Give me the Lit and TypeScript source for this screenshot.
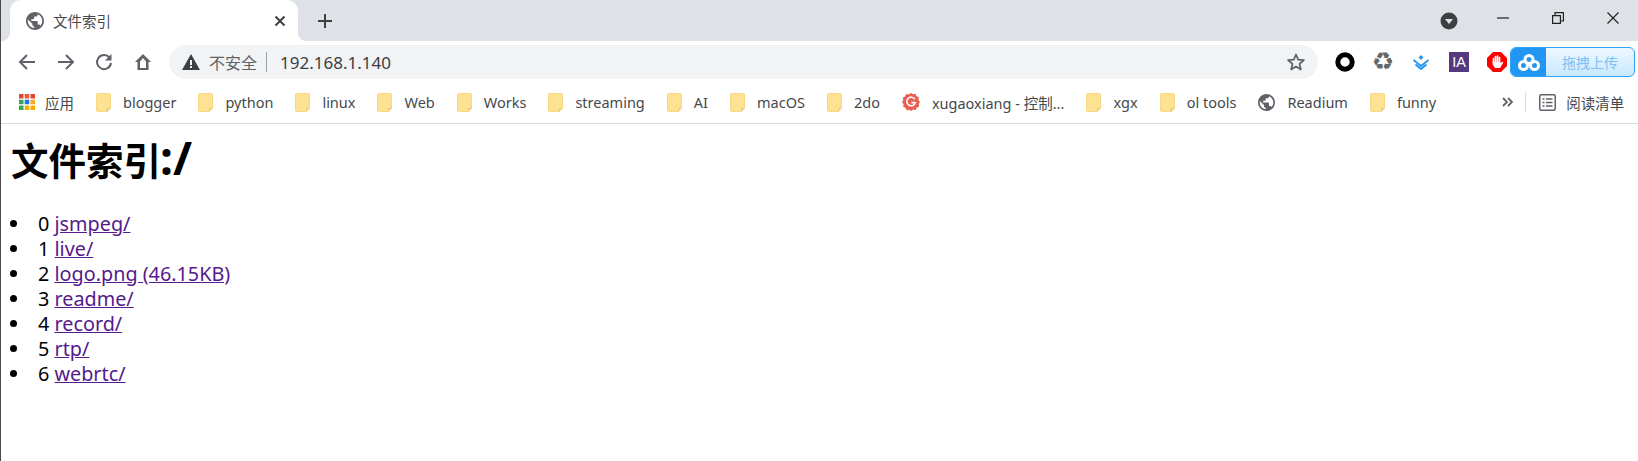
import { LitElement, html, css, svg } from "lit";
import { customElement } from "lit/decorators.js";

const GLOBE = "M12 2C6.48 2 2 6.48 2 12s4.48 10 10 10 10-4.48 10-10S17.52 2 12 2zm-1 17.93c-3.95-.49-7-3.85-7-7.93 0-.62.08-1.21.21-1.79L9 15v1c0 1.1.9 2 2 2v1.93zm6.9-2.54c-.26-.81-1-1.39-1.9-1.39h-1v-3c0-.55-.45-1-1-1H8v-2h2c.55 0 1-.45 1-1V7h2c1.1 0 2-.9 2-2v-.41c2.93 1.19 5 4.06 5 7.41 0 2.08-.8 3.97-2.1 5.39z";

const globe = (size: number) => html`<svg class="ico" width=${size} height=${size} viewBox="2 2 20 20"><path fill="#5f6368" d=${GLOBE}></path></svg>`;

const folder = html`<svg class="ico" width="15" height="19" viewBox="0 0 15 19">
  <path d="M1.500.500h12a1 1 0 0 1 1 1v13.500l-3 3.500H1.500a1 1 0 0 1-1-1V1.500a1 1 0 0 1 1-1z" fill="#fde293" stroke="#f6d883"></path>
  <path d="M11.500 18.500v-3h3" fill="none" stroke="#efc970"></path>
</svg>`;

const apps = html`<svg class="ico" width="16" height="16" viewBox="0 0 16 16">
  ${[
    ["#ea4335", "#ee5a34", "#ea4335"],
    ["#34a853", "#1a73e8", "#f9a825"],
    ["#34a853", "#f9ab00", "#f9ab00"],
  ].map((row, y) => row.map((c, x) => svg`<rect x=${x * 5.75} y=${y * 5.75} width="4.500" height="4.500" fill=${c}></rect>`))}
</svg>`;

const gitee = html`<svg class="ico" width="18" height="18" viewBox="0 0 18 18">
  <path fill="#ea5d50" d="M9 0l2 1.300 2.500-.5 1 2.400 2.400 1-.5 2.500L18 9l-1.300 2 .5 2.500-2.400 1-1 2.400-2.500-.5L9 18l-2-1.300-2.500.5-1-2.400-2.400-1 .5-2.500L0 9l1.300-2-.5-2.500 2.400-1 1-2.400 2.500.5z"></path>
  <path fill="none" stroke="#fff" stroke-width="1.600" d="M12.800 6.200A4.300 4.300 0 1 0 13.300 9.600H9.300"></path>
</svg>`;

const bookmarks: { label: string; icon?: unknown }[] = [
  { label: "blogger" },
  { label: "python" },
  { label: "linux" },
  { label: "Web" },
  { label: "Works" },
  { label: "streaming" },
  { label: "AI" },
  { label: "macOS" },
  { label: "2do" },
  { label: "xugaoxiang - 控制...", icon: gitee },
  { label: "xgx" },
  { label: "ol tools" },
  { label: "Readium", icon: globe(17) },
  { label: "funny" },
];

const files = ["jsmpeg/", "live/", "logo.png (46.15KB)", "readme/", "record/", "rtp/", "webrtc/"];

@customElement("app-root")
export class AppRoot extends LitElement {
  static styles = css`
    :host {
      display: block;
      box-sizing: border-box;
      height: 461px;
      overflow: hidden;
      background: #fff;
      border-left: 1px solid #4a4a4a;
      font-family: "Noto Sans", "Noto Sans CJK SC", sans-serif;
      color: #000;
    }
    .strip {
      height: 41px;
      background: #dee1e6;
      display: flex;
      align-items: stretch;
      padding-left: 9px;
    }
    .tab {
      position: relative;
      width: 288px;
      box-sizing: border-box;
      background: #fff;
      border-radius: 11px 11px 0 0;
      display: flex;
      align-items: center;
      padding: 0 11px 0 16px;
      gap: 9px;
    }
    .tab::before,
    .tab::after {
      content: "";
      position: absolute;
      bottom: 0;
      width: 9px;
      height: 9px;
    }
    .tab::before {
      left: -9px;
      background: radial-gradient(circle at 0 0, transparent 9px, #fff 9.500px);
    }
    .tab::after {
      right: -9px;
      background: radial-gradient(circle at 100% 0, transparent 9px, #fff 9.500px);
    }
    .tab-title {
      flex: 1;
      font-size: 14.500px;
      color: #45494d;
    }
    .plus {
      margin: 0 0 0 19px;
      display: flex;
      align-items: center;
    }
    .spacer {
      flex: 1;
    }
    .profile {
      display: flex;
      align-items: center;
      margin-right: 39px;
    }
    .winctl {
      display: flex;
      align-items: center;
      gap: 43px;
      padding: 0 19px 6px 0;
    }
    .toolbar {
      height: 42px;
      display: flex;
      align-items: center;
      padding-left: 16px;
      box-sizing: border-box;
    }
    .nav {
      display: flex;
      align-items: center;
      gap: 18.700px;
      width: 152px;
    }
    .omni {
      width: 1149px;
      height: 34px;
      box-sizing: border-box;
      border-radius: 17px;
      background: #f1f3f4;
      display: flex;
      align-items: center;
      padding: 0 12px 0 13px;
    }
    .insecure {
      font-size: 16px;
      color: #5f6368;
      margin-left: 9px;
    }
    .sep {
      width: 1px;
      height: 20px;
      background: #9aa0a6;
      margin: 0 13px 0 9px;
    }
    .url {
      flex: 1;
      font-size: 17px;
      color: #3c4043;
    }
    .exts {
      display: flex;
      align-items: center;
      gap: 18px;
      margin-left: 17px;
    }
    .recycle {
      width: 20px;
      height: 20px;
      display: flex;
      align-items: center;
      justify-content: center;
      font-family: "DejaVu Sans", sans-serif;
      font-size: 25px;
      line-height: 20px;
      color: #666;
    }
    .baidu {
      position: absolute;
      left: 1510px;
      top: 47px;
      width: 125px;
      height: 30px;
      box-sizing: border-box;
      display: flex;
      border: 1px solid #2ea1f5;
      border-radius: 6px;
      overflow: hidden;
      background: linear-gradient(180deg, #eef8ff, #c8e8fd);
    }
    .baidu-logo {
      width: 35px;
      background: #2196f3;
      display: flex;
      align-items: center;
      justify-content: center;
    }
    .baidu-text {
      flex: 1;
      display: flex;
      align-items: center;
      justify-content: center;
      font-size: 14px;
      color: #7cc2f3;
    }
    .bar {
      height: 41px;
      padding: 0 0 2px 18px;
      border-bottom: 1px solid #dadce0;
      box-sizing: border-box;
      display: flex;
      align-items: center;
      font-size: 14.500px;
      color: #45494d;
    }
    .apps {
      display: flex;
      align-items: center;
      gap: 10px;
      margin-right: 22px;
    }
    .bm {
      display: flex;
      align-items: center;
      gap: 12px;
      margin-right: 22px;
      white-space: nowrap;
    }
    .ico {
      display: block;
      flex: none;
    }
    .more {
      margin-left: 44px;
      display: flex;
      align-items: center;
    }
    .vsep {
      width: 1px;
      height: 20px;
      background: #dadce0;
      margin: 0 13px 0 12px;
    }
    .reading {
      display: flex;
      align-items: center;
      gap: 10px;
    }
    h1 {
      margin: 10px 0 0 10px;
      font-size: 37.500px;
      line-height: 44px;
      font-weight: 700;
    }
    .path {
      font-size: 46px;
      line-height: 1;
      margin-left: -1px;
    }
    ul {
      list-style: none;
      margin: 27.500px 0 0;
      padding: 0 0 0 9px;
      font-size: 19.800px;
      line-height: 25px;
    }
    li {
      display: flex;
      align-items: center;
    }
    .bullet {
      width: 7px;
      height: 7px;
      border-radius: 50%;
      background: #000;
      margin-right: 21px;
      flex: none;
    }
    a {
      color: #551a8b;
      text-decoration: underline;
    }
  `;

  render() {
    return html`
      <div class="strip">
        <div class="tab">
          ${globe(18)}
          <span class="tab-title">文件索引</span>
          <svg width="14" height="14" viewBox="0 0 14 14"><path d="M2.500 2.500l9 9M11.500 2.500l-9 9" stroke="#3c4043" stroke-width="2" fill="none"></path></svg>
        </div>
        <div class="plus">
          <svg width="16" height="16" viewBox="0 0 16 16"><path d="M8 1v14M1 8h14" stroke="#3c4043" stroke-width="2" fill="none"></path></svg>
        </div>
        <div class="spacer"></div>
        <div class="profile">
          <svg width="18" height="18" viewBox="0 0 18 18"><circle cx="9" cy="9" r="8.500" fill="#3c4043"></circle><path d="M5 7h8l-4 5z" fill="#dee1e6"></path></svg>
        </div>
        <div class="winctl">
          <svg width="12" height="12" viewBox="0 0 12 12"><path d="M0 6h12" stroke="#222" stroke-width="1.200"></path></svg>
          <svg width="12" height="12" viewBox="0 0 12 12"><path d="M.6 3.600h7.800v7.800H.6zM3 3.600V.6h8.400v8.400H8.400" stroke="#222" stroke-width="1.200" fill="none"></path></svg>
          <svg width="12" height="12" viewBox="0 0 12 12"><path d="M.5.500l11 11M11.500.500l-11 11" stroke="#222" stroke-width="1.200" fill="none"></path></svg>
        </div>
      </div>
      <div class="toolbar">
        <div class="nav">
          <svg width="20" height="20" viewBox="0 0 20 20"><path d="M18 10H3M10 3l-7 7 7 7" stroke="#5f6368" stroke-width="2" fill="none"></path></svg>
          <svg width="20" height="20" viewBox="0 0 20 20"><path d="M2 10h15M10 3l7 7-7 7" stroke="#5f6368" stroke-width="2" fill="none"></path></svg>
          <svg width="20" height="20" viewBox="0 0 20 20"><path d="M15.500 5.700A7 7 0 1 0 17 11" stroke="#5f6368" stroke-width="2" fill="none"></path><path d="M17.500 2v6.500H11z" fill="#5f6368"></path></svg>
          <svg width="20" height="20" viewBox="0 0 20 20"><path d="M10 2L2 10h2.500v8h11v-8H18zM7 16v-6.500L10 6l3 3.500V16z" fill="#5f6368" fill-rule="evenodd"></path></svg>
        </div>
        <div class="omni">
          <svg width="18" height="16" viewBox="0 0 18 16"><path d="M9 0l9 16H0z" fill="#3c4043"></path><path d="M8 6h2v5H8zM8 12h2v2H8z" fill="#f1f3f4"></path></svg>
          <span class="insecure">不安全</span>
          <span class="sep"></span>
          <span class="url">192.168.1.140</span>
          <svg width="20" height="20" viewBox="0 0 20 20"><path d="M10 2.500l2.200 5.200 5.600.5-4.300 3.700 1.300 5.500L10 14.500 5.200 17.400l1.300-5.500L2.200 8.200l5.600-.5z" stroke="#5f6368" stroke-width="1.800" fill="none" stroke-linejoin="round"></path></svg>
        </div>
        <div class="exts">
          <svg width="20" height="20" viewBox="0 0 20 20"><circle cx="10" cy="10" r="7.200" fill="none" stroke="#000" stroke-width="5"></circle></svg>
          <span class="recycle">♻</span>
          <svg width="20" height="20" viewBox="0 0 20 20"><path d="M10 3l2.500 2.500L10 8 7.500 5.500z" fill="#2196f3"></path><path d="M2.500 8l7.500 6 7.500-6M4.500 12.500l5.500 4.500 5.500-4.500" stroke="#2196f3" stroke-width="1.800" fill="none"></path></svg>
          <svg width="20" height="20" viewBox="0 0 20 20"><rect width="20" height="20" fill="#54397e"></rect><text x="10" y="15" font-size="14.500" fill="#fff" text-anchor="middle" font-family="Liberation Sans">IA</text></svg>
          <svg width="20" height="20" viewBox="0 0 20 20"><path d="M6 0h8l6 6v8l-6 6H6l-6-6V6z" fill="#f00"></path><path d="M6.500 11V6.500M8.500 10V4.500M10.500 10V4M12.500 11V5.500" stroke="#fff" stroke-width="1.700" stroke-linecap="round" fill="none"></path><path d="M5.700 10h7.600v1.500l2-2 1 1-3.300 5.500H8L5.700 12.500z" fill="#fff"></path></svg>
        </div>
      </div>
      <div class="baidu">
        <div class="baidu-logo">
          <svg width="22" height="17" viewBox="0 0 22 17" fill="none" stroke="#fff" stroke-width="3"><circle cx="11" cy="5.500" r="4"></circle><circle cx="5.500" cy="11.500" r="4"></circle><circle cx="16.500" cy="11.500" r="4"></circle></svg>
        </div>
        <div class="baidu-text">拖拽上传</div>
      </div>
      <div class="bar">
        <div class="apps">${apps}<span>应用</span></div>
        ${bookmarks.map(
          (b) => html`<div class="bm">${b.icon ?? folder}<span>${b.label}</span></div>`
        )}
        <div class="more">
          <svg width="11" height="10" viewBox="0 0 11 10"><path d="M1 1l4 4-4 4M6 1l4 4-4 4" stroke="#5f6368" stroke-width="1.800" fill="none"></path></svg>
        </div>
        <span class="vsep"></span>
        <div class="reading">
          <svg width="17" height="17" viewBox="0 0 17 17" fill="none" stroke="#5f6368" stroke-width="1.500"><rect x=".75" y=".75" width="15.500" height="15.500" rx="1.500"></rect><path d="M3.500 5h2M7 5h6.500M3.500 8.500h2M7 8.500h6.500M3.500 12h2M7 12h6.500"></path></svg>
          <span>阅读清单</span>
        </div>
      </div>
      <h1>文件索引<span class="path">:/</span></h1>
      <ul>
        ${files.map(
          (f, i) => html`<li><span class="bullet"></span><span>${i} <a href="#">${f}</a></span></li>`
        )}
      </ul>
    `;
  }
}
